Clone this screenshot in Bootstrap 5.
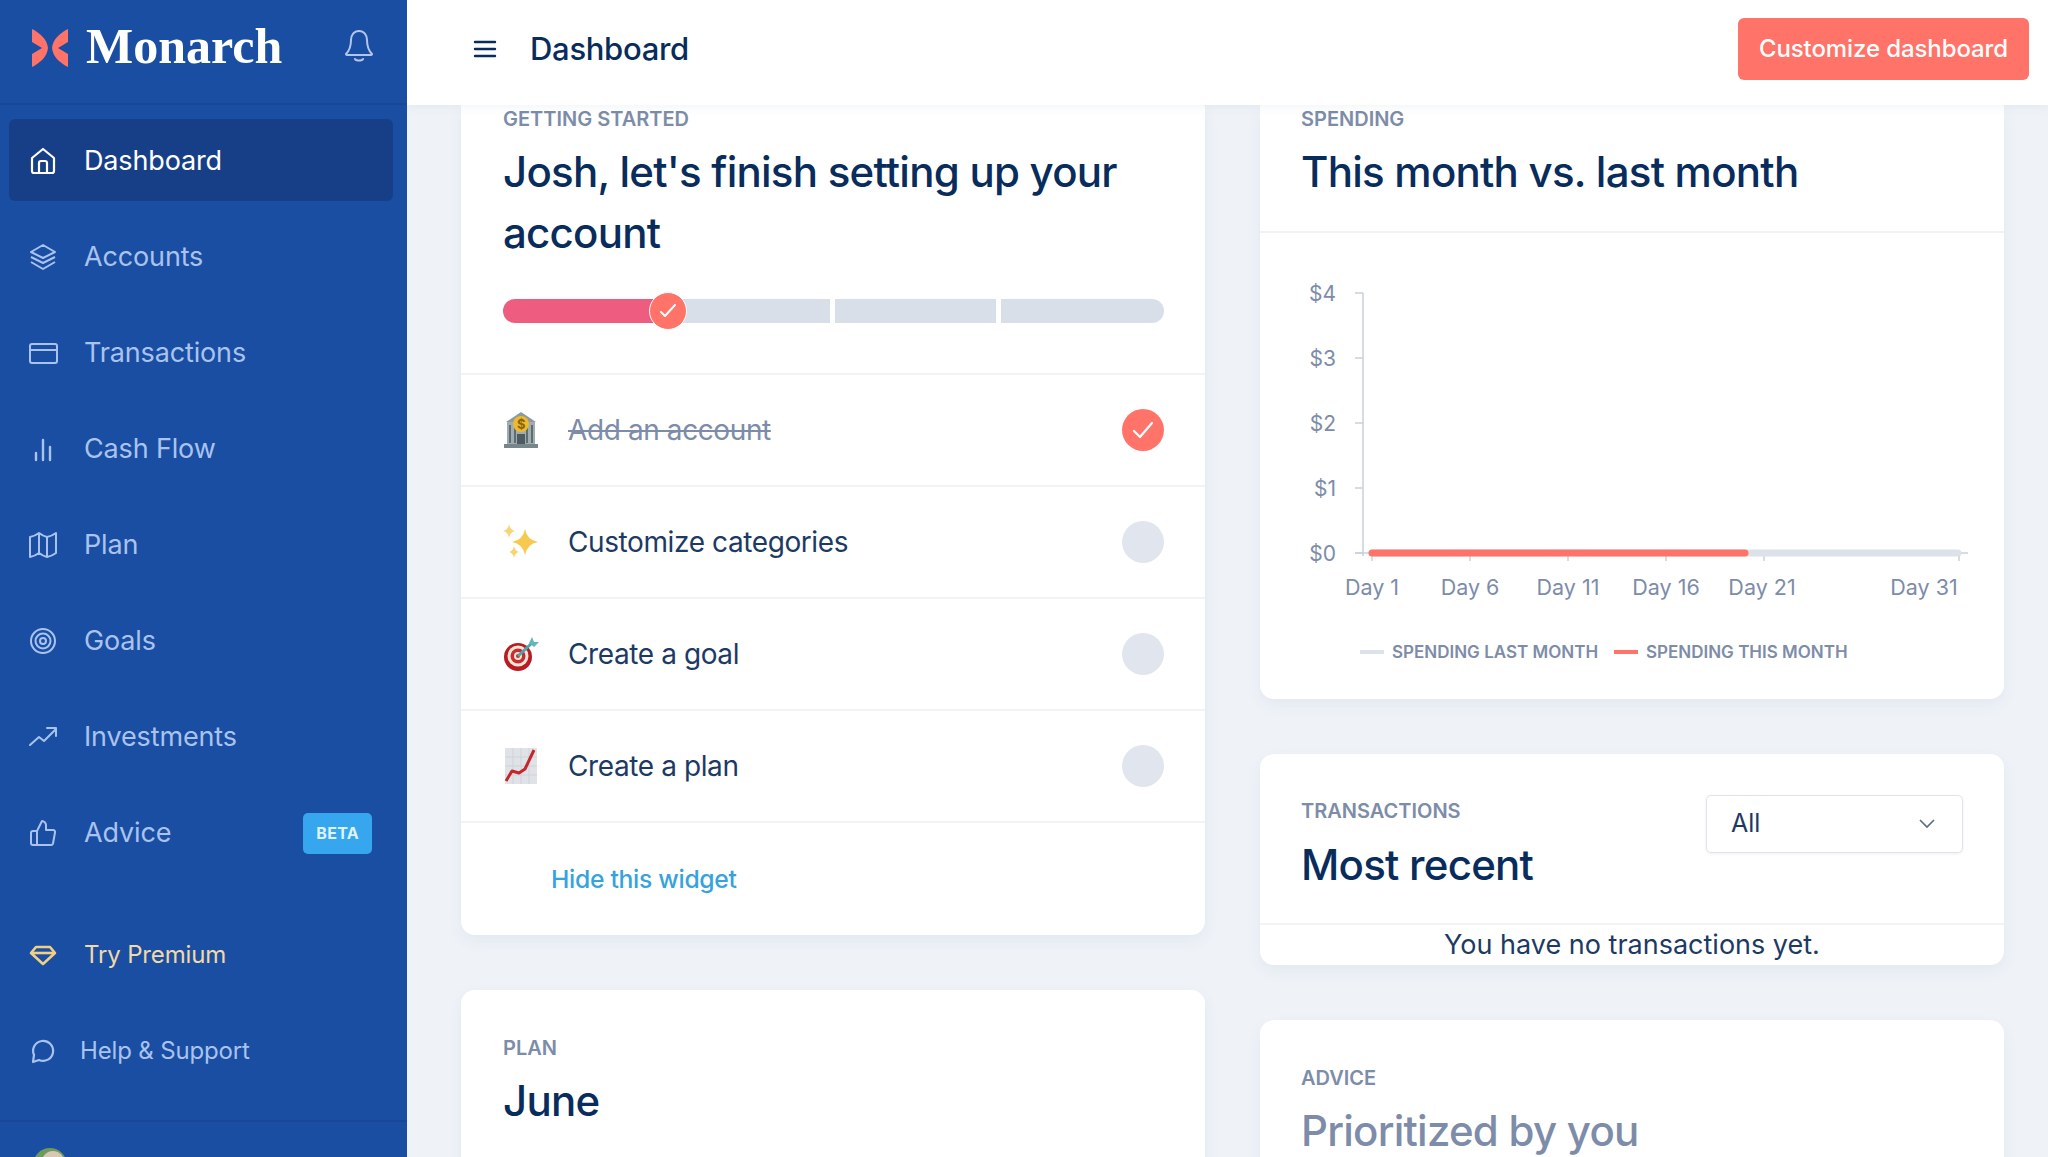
<!DOCTYPE html>
<html lang="en">
<head>
  <meta charset="UTF-8">
  <title>Monarch - Dashboard</title>
  <link href="https://cdn.jsdelivr.net/npm/bootstrap@5.3.3/dist/css/bootstrap.min.css" rel="stylesheet">
  <style>
    html, body { height: 100%; overflow: hidden; }
    body { background: #eff3f8; font-family: Inter, "Liberation Sans", sans-serif; color: #082c5c; }
    .shell { height: 1157px; overflow: hidden; }
    .side { width: 407px; flex: none; background: #194ea3; color: #a9c3ee; }
    .side-top { height: 105px; flex: none; border-bottom: 2px solid #174796; padding: 0 32px 8px 32px; }
    .brand { font-family: "Liberation Serif", serif; font-weight: 700; font-size: 50px; line-height: 1; color: #fff; margin-left: 18px; }
    .side-list { padding: 14px 14px 0 9px; height: 1015px; flex: none; }
    .side-item { height: 82px; margin-bottom: 14px; padding: 2px 21px 0 19px; border-radius: 6px; font-size: 27px; letter-spacing: -.15px; color: #a9c3ee; text-decoration: none; }
    .side-item.now { background: #173f87; color: #fff; }
    .side-item svg { width: 30px; height: 30px; flex: none; margin-right: 26px; }
    .side-item.help-item svg { margin-right: 22px; }
    .side-item.gap-top { margin-top: 40px; }
    .side-item.sm { font-size: 24px; letter-spacing: -.15px; }
    .side-item.gold { color: #f1d9a8; }
    .beta { background: #36a7ee; color: #dff2ff; font-size: 16px; font-weight: 700; padding: 0 13px; height: 41px; border-radius: 5px; letter-spacing: .3px; margin-left: auto; }
    .side-foot { border-top: 2px solid #174796; height: 37px; flex: none; padding: 26px 0 0 33px; overflow: hidden; }
    .main-col { min-width: 0; height: 1157px; overflow: hidden; }
    .topbar { height: 105px; flex: none; background: #fff; padding: 0 19px 8px 66px; box-shadow: 0 2px 10px rgba(30,60,110,.06); position: relative; z-index: 2; }
    .topbar h1 { font-size: 31px; font-weight: 500; letter-spacing: -.3px; margin: 0 0 0 33px; color: #082c5c; }
    .btn-coral { background: #ff7369; color: #fff; font-size: 24px; font-weight: 500; letter-spacing: -.1px; height: 62px; padding: 0 21px; border: 0; border-radius: 6px; }
    .board { padding: 0 45px 0 54px; gap: 55px; min-height: 0; }
    .board-col { width: 744px; flex: none; }
    .panel { background: #fff; border: 0; border-radius: 14px; box-shadow: 0 6px 16px rgba(40,70,120,.06); margin-bottom: 55px; overflow: hidden; }
    .panel.flat-top { border-top-left-radius: 0; border-top-right-radius: 0; }
    .eyebrow { font-size: 20px; font-weight: 600; color: #7d8ca8; letter-spacing: 0; line-height: 28px; text-transform: uppercase; }
    .big { font-size: 42px; font-weight: 500; letter-spacing: -.75px; line-height: 61px; margin: 0; color: #082c5c; }
    .big.dim { color: #7d8ca8; }
    .pad-x { padding-left: 41px; padding-right: 41px; }
    .left-x { padding-left: 42px; }
    .intro { padding-bottom: 50px; }
    .spend-head { height: 126px; }
    .mini-panel { padding-top: 44px; height: 200px; }
    .tx-head { height: 169px; padding-top: 43px; }
    .tx-head .big { margin-top: 9px; }
    .steps { gap: 5px; height: 24px; margin-top: 36px; position: relative; }
    .steps div { flex: 1; background: #d8dfe9; }
    .steps .s1 { background: #ee5d80; border-radius: 12px 0 0 12px; flex: none; width: 165px; }
    .steps .s2 { flex: none; width: 157px; }
    .steps .s3 { flex: none; width: 161px; }
    .steps .s4 { border-radius: 0 12px 12px 0; }
    .steps .knob { position: absolute; left: 146px; top: -7px; width: 38px; height: 38px; flex: none; background: #ff7369; border: 1px solid #fff; border-radius: 50%; }
    .todo { height: 112px; border-top: 2px solid #f1f3f6; font-size: 28px; letter-spacing: -.4px; color: #1c3a63; }
    .todo svg.emo { width: 36px; height: 38px; flex: none; margin-right: 29px; }
    .todo.done span { color: #7d8ca8; text-decoration: line-through; }
    .dot { width: 42px; height: 42px; border-radius: 50%; background: #e1e6ee; margin-left: auto; flex: none; }
    .dot.on { background: #ff7369; }
    .hide-link { display: block; border-top: 2px solid #f1f3f6; height: 114px; line-height: 112px; padding-left: 90px; font-size: 24.7px; font-weight: 500; letter-spacing: -.3px; color: #36a3dc; text-decoration: none; }
    .rule { border-top: 2px solid #f1f3f6; }
    .chart-svg { display: block; width: 744px; height: 466px; }
    .chart-svg text { font-family: Inter, "Liberation Sans", sans-serif; fill: #7d8ca8; }
    .pick { width: 257px; height: 58px; margin-top: -2px; border: 1px solid #dfe4eb; border-radius: 5px; font-size: 25px; padding: 0 27px 0 24px; color: #1c3a63; box-shadow: 0 1px 3px rgba(40,70,120,.08); background: #fff; }
    .empty-note { font-size: 27px; letter-spacing: 0; text-align: center; line-height: 40px; color: #1c3a63; }
  </style>
</head>
<body>
  <div class="shell d-flex">
    <nav class="side d-flex flex-column">
      <div class="side-top d-flex align-items-center">
        <svg width="36" height="38" viewBox="0 0 36 38"><path d="M0 0C8 4 15 10 16 19 15 28 8 34 0 38V25L10 19 0 13Z" fill="#ff7369"/><path d="M36 0C28 4 21 10 20 19 21 28 28 34 36 38V25L26 19 36 13Z" fill="#ff7369"/></svg>
        <span class="brand mb-1">Monarch</span>
        <svg class="ms-auto mb-1" width="32" height="34" viewBox="0 0 32 34" fill="none" stroke="#b3c5ea" stroke-width="2"><path d="M16 2c-5 0-8 4-8 9 0 7-2 11-5 14 0 1 1 1 2 1h22c1 0 2 0 2-1-3-3-5-7-5-14 0-5-3-9-8-9z"/><path d="M12 30c1 2 7 2 8 0" stroke-linecap="round"/></svg>
      </div>
      <div class="side-list">
        <a class="side-item now d-flex align-items-center"><svg viewBox="0 0 30 30" fill="none" stroke="#fff" stroke-width="2.2" stroke-linejoin="round"><path d="M4 12 15 3l11 9v13a2 2 0 0 1-2 2H6a2 2 0 0 1-2-2z"/><path d="M11 27V17a2 2 0 0 1 2-2h4a2 2 0 0 1 2 2v10"/></svg>Dashboard</a>
        <a class="side-item d-flex align-items-center"><svg viewBox="0 0 30 30" fill="none" stroke="#a9c3ee" stroke-width="2" stroke-linejoin="round"><path d="M15 3 3 10l12 6 12-6z"/><path d="M3 15l12 6 12-6"/><path d="M3 20l12 7 12-7"/></svg>Accounts</a>
        <a class="side-item d-flex align-items-center"><svg viewBox="0 0 30 30" fill="none" stroke="#a9c3ee" stroke-width="2"><rect x="2" y="6" width="27" height="19" rx="2"/><path d="M2 12h27"/></svg>Transactions</a>
        <a class="side-item d-flex align-items-center"><svg viewBox="0 0 30 30" fill="none" stroke="#a9c3ee" stroke-width="2.4" stroke-linecap="round"><path d="M8 26v-7M15 26V6M22 26V13"/></svg>Cash Flow</a>
        <a class="side-item d-flex align-items-center"><svg viewBox="0 0 30 30" fill="none" stroke="#a9c3ee" stroke-width="2" stroke-linejoin="round"><path d="M2 7q5-1 9-4 4 3 8 4 5-1 9-4v20q-4 3-9 4-4-1-8-4-4 3-9 4z"/><path d="M11 3v20M19 7v20"/></svg>Plan</a>
        <a class="side-item d-flex align-items-center"><svg viewBox="0 0 30 30" fill="none" stroke="#a9c3ee" stroke-width="2"><circle cx="15" cy="15" r="12"/><circle cx="15" cy="15" r="7.5"/><circle cx="15" cy="15" r="3"/></svg>Goals</a>
        <a class="side-item d-flex align-items-center"><svg viewBox="0 0 30 30" fill="none" stroke="#a9c3ee" stroke-width="2" stroke-linecap="round" stroke-linejoin="round"><path d="M2 23l9-8 5 4 12-12"/><path d="M19 6h9v8"/></svg>Investments</a>
        <a class="side-item d-flex align-items-center"><svg viewBox="0 0 30 30" fill="none" stroke="#a9c3ee" stroke-width="2" stroke-linejoin="round"><path d="M9 13l5-10c2 0 4 2 4 4v5h7a2 2 0 0 1 2 2.5l-2 11a2 2 0 0 1-2 1.5H9z"/><path d="M9 13H5a2 2 0 0 0-2 2v10a2 2 0 0 0 2 2h4"/></svg>Advice<span class="beta d-flex align-items-center">BETA</span></a>
        <a class="side-item sm gold gap-top d-flex align-items-center"><svg viewBox="0 0 30 30" fill="none" stroke="#f1d084" stroke-width="2.6" stroke-linejoin="round"><path d="M8 7h14l5 6-12 11L3 13z"/><path d="M3 13h24" /></svg>Try Premium</a>
        <a class="side-item sm help-item d-flex align-items-center"><svg viewBox="0 0 30 30" fill="none" stroke="#a9c3ee" stroke-width="2.2" stroke-linejoin="round"><path d="M5 26l1-7a10 10 0 1 1 5 5z"/></svg>Help &amp; Support</a>
      </div>
      <div class="side-foot">
        <svg width="34" height="34" viewBox="0 0 34 34"><circle cx="17" cy="17" r="17" fill="#6f9a5a"/><circle cx="20" cy="14" r="11" fill="#d9c7b4"/></svg>
      </div>
    </nav>
    <div class="main-col flex-grow-1 d-flex flex-column">
      <header class="topbar d-flex align-items-center">
        <svg width="24" height="20" viewBox="0 0 24 20" stroke="#082c5c" stroke-width="2.4" stroke-linecap="round"><path d="M2 3h20M2 10h20M2 17h20"/></svg>
        <h1>Dashboard</h1>
        <button class="btn btn-coral ms-auto">Customize dashboard</button>
      </header>
      <div class="board d-flex">
        <div class="board-col">
          <section class="panel flat-top">
            <div class="pad-x left-x intro">
              <div class="eyebrow">Getting started</div>
              <h2 class="big mt-2">Josh, let's finish setting up your account</h2>
              <div class="steps d-flex">
                <div class="s1"></div><div class="s2"></div><div class="s3"></div><div class="s4"></div>
                <div class="knob d-flex align-items-center justify-content-center"><svg width="18" height="16" viewBox="0 0 18 16" fill="none" stroke="#fff" stroke-width="2" stroke-linecap="round" stroke-linejoin="round"><path d="M2 9l4 4 10-11"/></svg></div>
              </div>
            </div>
            <div class="todo done pad-x left-x d-flex align-items-center">
              <svg class="emo" viewBox="0 0 36 38"><path d="M18 1 33 11H3z" fill="#8d9aa0"/><rect x="4" y="11" width="28" height="22" fill="#9fadb1"/><rect x="1" y="33" width="34" height="4" fill="#78868c"/><path d="M7 14v18M12 14v18M24 14v18M29 14v18" stroke="#5e6d72" stroke-width="2"/><circle cx="18" cy="13" r="8" fill="#eebb2b"/><rect x="14" y="23" width="8" height="10" fill="#4d5b60"/><text x="18" y="18" text-anchor="middle" font-size="13" font-weight="700" fill="#8a6410">$</text></svg>
              <span>Add an account</span>
              <div class="dot on d-flex align-items-center justify-content-center"><svg width="22" height="20" viewBox="0 0 22 20" fill="none" stroke="#fff" stroke-width="2.2" stroke-linecap="round" stroke-linejoin="round"><path d="M2 11l6 6L20 3"/></svg></div>
            </div>
            <div class="todo pad-x left-x d-flex align-items-center">
              <svg class="emo" viewBox="0 0 36 38"><path d="M22 6q2 11 13 13q-11 2-13 13q-2-11-13-13q11-2 13-13z" fill="#f7c94f"/><path d="M6 1q1 6 6 7q-5 1-6 7q-1-6-6-7q5-1 6-7z" fill="#f7d574"/><path d="M11 23q1 5 5 6q-4 1-5 6q-1-5-5-6q4-1 5-6z" fill="#f7d574"/></svg>
              <span>Customize categories</span><div class="dot"></div>
            </div>
            <div class="todo pad-x left-x d-flex align-items-center">
              <svg class="emo" viewBox="0 0 36 38"><circle cx="15" cy="22" r="14" fill="#b71c22"/><circle cx="15" cy="21" r="10.5" fill="#f3e5da"/><circle cx="15" cy="21" r="7.5" fill="#cb2a2e"/><circle cx="15" cy="21" r="4" fill="#f3e5da"/><circle cx="15" cy="21" r="2" fill="#cb2a2e"/><path d="M15 21 29 8" stroke="#4fa3ac" stroke-width="3"/><path d="M26 8l3-6 2 5 5 0-5 5z" fill="#5fb8c0"/></svg>
              <span>Create a goal</span><div class="dot"></div>
            </div>
            <div class="todo pad-x left-x d-flex align-items-center">
              <svg class="emo" viewBox="0 0 36 38"><rect x="2" y="1" width="32" height="36" fill="#dfe2e6"/><path d="M2 10h32M2 19h32M2 28h32M10 1v36M18 1v36M26 1v36" stroke="#cfd3d8" stroke-width="1"/><path d="M3 34 9 24l7 2 6-4L31 3" fill="none" stroke="#c5262b" stroke-width="3" stroke-linejoin="round"/></svg>
              <span>Create a plan</span><div class="dot"></div>
            </div>
            <a class="hide-link" href="#">Hide this widget</a>
          </section>
          <section class="panel pad-x left-x mini-panel">
            <div class="eyebrow">Plan</div>
            <h2 class="big mt-2">June</h2>
          </section>
        </div>
        <div class="board-col">
          <section class="panel flat-top">
            <div class="pad-x spend-head">
              <div class="eyebrow">Spending</div>
              <h2 class="big mt-2">This month vs. last month</h2>
            </div>
            <div class="rule">
              <svg class="chart-svg" viewBox="0 1 744 466">
                <g stroke="#c9d1dc" stroke-width="1.5" fill="none">
                  <path d="M103 61V324"/>
                  <path d="M95 61h8M95 126h8M95 191h8M95 256h8M95 321h8"/>
                  <path d="M95 321H708"/>
                  <path d="M112 321v8M210 321v8M308 321v8M406 321v8M504 321v8M699 321v8"/>
                </g>
                <path d="M112 321H698" stroke="#dde2ea" stroke-width="7" stroke-linecap="round"/>
                <path d="M112 321H485" stroke="#ff7369" stroke-width="7" stroke-linecap="round"/>
                <g font-size="21" text-anchor="end">
                  <text x="76" y="69">$4</text><text x="76" y="134">$3</text><text x="76" y="199">$2</text><text x="76" y="264">$1</text><text x="76" y="329">$0</text>
                </g>
                <g font-size="21.5" text-anchor="middle">
                  <text x="112" y="363">Day 1</text><text x="210" y="363">Day 6</text><text x="308" y="363">Day 11</text><text x="406" y="363">Day 16</text><text x="502" y="363">Day 21</text><text x="664" y="363">Day 31</text>
                </g>
                <path d="M100 420h24" stroke="#dde2ea" stroke-width="4"/>
                <path d="M354 420h24" stroke="#ff7369" stroke-width="4"/>
                <text x="132" y="426" font-size="17" font-weight="600">SPENDING LAST MONTH</text>
                <text x="386" y="426" font-size="17" font-weight="600">SPENDING THIS MONTH</text>
              </svg>
            </div>
          </section>
          <section class="panel">
            <div class="pad-x tx-head d-flex justify-content-between">
              <div>
                <div class="eyebrow">Transactions</div>
                <h2 class="big">Most recent</h2>
              </div>
              <div class="pick d-flex align-items-center justify-content-between">All<svg width="16" height="10" viewBox="0 0 16 10" fill="none" stroke="#5b6b85" stroke-width="1.6"><path d="M1 1l7 7 7-7"/></svg></div>
            </div>
            <div class="rule empty-note">You have no transactions yet.</div>
          </section>
          <section class="panel pad-x mini-panel">
            <div class="eyebrow">Advice</div>
            <h2 class="big dim mt-2">Prioritized by you</h2>
          </section>
        </div>
      </div>
    </div>
  </div>
  <script src="https://cdn.jsdelivr.net/npm/bootstrap@5.3.3/dist/js/bootstrap.bundle.min.js"></script>
</body>
</html>
